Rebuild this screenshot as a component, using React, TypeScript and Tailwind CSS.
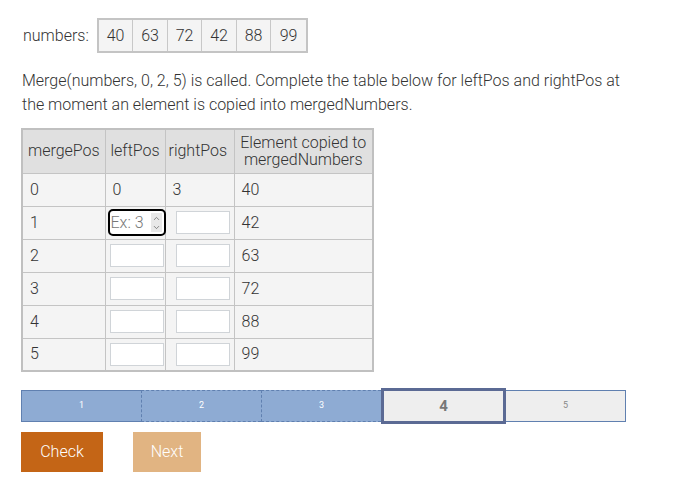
import { ChevronUp, ChevronDown } from "lucide-react";

const numbers = [40, 63, 72, 42, 88, 99];
const copied = [40, 42, 63, 72, 88, 99];

const App = () => {
  return (
    <div className="w-[685px] h-[491px] bg-white pl-[21px] pt-[18px] text-[16px] font-light text-[#333] font-['Roboto','Liberation_Sans',sans-serif]">
      <div className="flex items-center gap-[8px]">
        <span className="pl-[2px]">numbers:</span>
        <div className="flex border-2 border-[#c4c4c4] bg-[#f4f4f4]">
          {numbers.map((n, i) => (
            <div
              key={i}
              className={`w-[34.5px] h-[31px] flex items-center justify-center ${
                i < numbers.length - 1 ? "border-r border-[#c8c8c8]" : ""
              }`}
            >
              {n}
            </div>
          ))}
        </div>
      </div>

      <p className="mt-[16px] pl-[1px] leading-[24px] w-[620px]">
        Merge(numbers, 0, 2, 5) is called. Complete the table below for leftPos and rightPos at the moment an element is copied into mergedNumbers.
      </p>

      <table className="mt-[11px] table-fixed w-[351px] border-collapse border-2 border-[#c0c0c0] bg-[#f4f4f4]">
        <colgroup>
          <col className="w-[83px]" />
          <col className="w-[60px]" />
          <col className="w-[69px]" />
          <col className="w-[139px]" />
        </colgroup>
        <thead>
          <tr className="bg-[#e0e0e0] h-[44px]">
            <th className="border border-[#c4c4c4] px-[5px] text-left font-light whitespace-nowrap">mergePos</th>
            <th className="border border-[#c4c4c4] px-[5px] text-left font-light whitespace-nowrap">leftPos</th>
            <th className="border border-[#c4c4c4] px-[3px] text-left font-light whitespace-nowrap">rightPos</th>
            <th className="border border-[#c4c4c4] px-[2px] text-center font-light leading-[17px] whitespace-nowrap">
              Element copied to
              <br />
              mergedNumbers
            </th>
          </tr>
        </thead>
        <tbody>
          {copied.map((v, i) => (
            <tr key={i} className="h-[33px]">
              <td className="border border-[#c4c4c4] px-[7px]">{i}</td>
              <td className="border border-[#c4c4c4] px-[4px]">
                {i === 0 ? (
                  <span className="pl-[3px]">0</span>
                ) : i === 1 ? (
                  <div className="relative w-[54px] h-[23px] rounded-[3px] outline-2 outline-black bg-white flex items-center">
                    <span className="pl-[1px] text-[#777]">Ex: 3</span>
                    <span className="absolute right-[2px] top-[2px] w-[11px] h-[19px] bg-[#e8e8e8] flex flex-col items-center justify-center text-[#666]">
                      <ChevronUp size={9} strokeWidth={2} />
                      <ChevronDown size={9} strokeWidth={2} />
                    </span>
                  </div>
                ) : (
                  <input className="block w-[54px] h-[23px] border border-[#d0d4d8] bg-white" />
                )}
              </td>
              <td className="border border-[#c4c4c4] px-[10px]">
                {i === 0 ? (
                  <span className="-ml-[3px]">3</span>
                ) : (
                  <input className="block w-[54px] h-[23px] border border-[#d0d4d8] bg-white" />
                )}
              </td>
              <td className="border border-[#c4c4c4] px-[7px]">{v}</td>
            </tr>
          ))}
        </tbody>
      </table>

      <div className="mt-[18px] flex w-[605px] h-[32px]">
        {[1, 2, 3].map((n) => (
          <div
            key={n}
            className={`w-[120px] flex items-center justify-center bg-[#8eabd3] border-y border-[#6080b0] text-white text-[9px] font-normal ${
              n === 1 ? "border-l" : "border-l border-dashed border-l-[#6080b0]"
            }`}
          >
            {n}
          </div>
        ))}
        <div className="w-[125px] -my-[2px] h-[36px] flex items-center justify-center bg-[#eeeeee] border-[3px] border-[#5b6a94] text-[#777] text-[15px] font-bold">
          4
        </div>
        <div className="flex-1 flex items-center justify-center bg-[#eeeeee] border-y border-r border-[#6080b0] text-[#888] text-[9px] font-normal">
          5
        </div>
      </div>

      <div className="mt-[10px] flex gap-[30px]">
        <button className="w-[82px] h-[40px] bg-[#c46516] text-white">Check</button>
        <button className="w-[68px] h-[40px] bg-[#e1b482] text-white">Next</button>
      </div>
    </div>
  );
};

export default App;
